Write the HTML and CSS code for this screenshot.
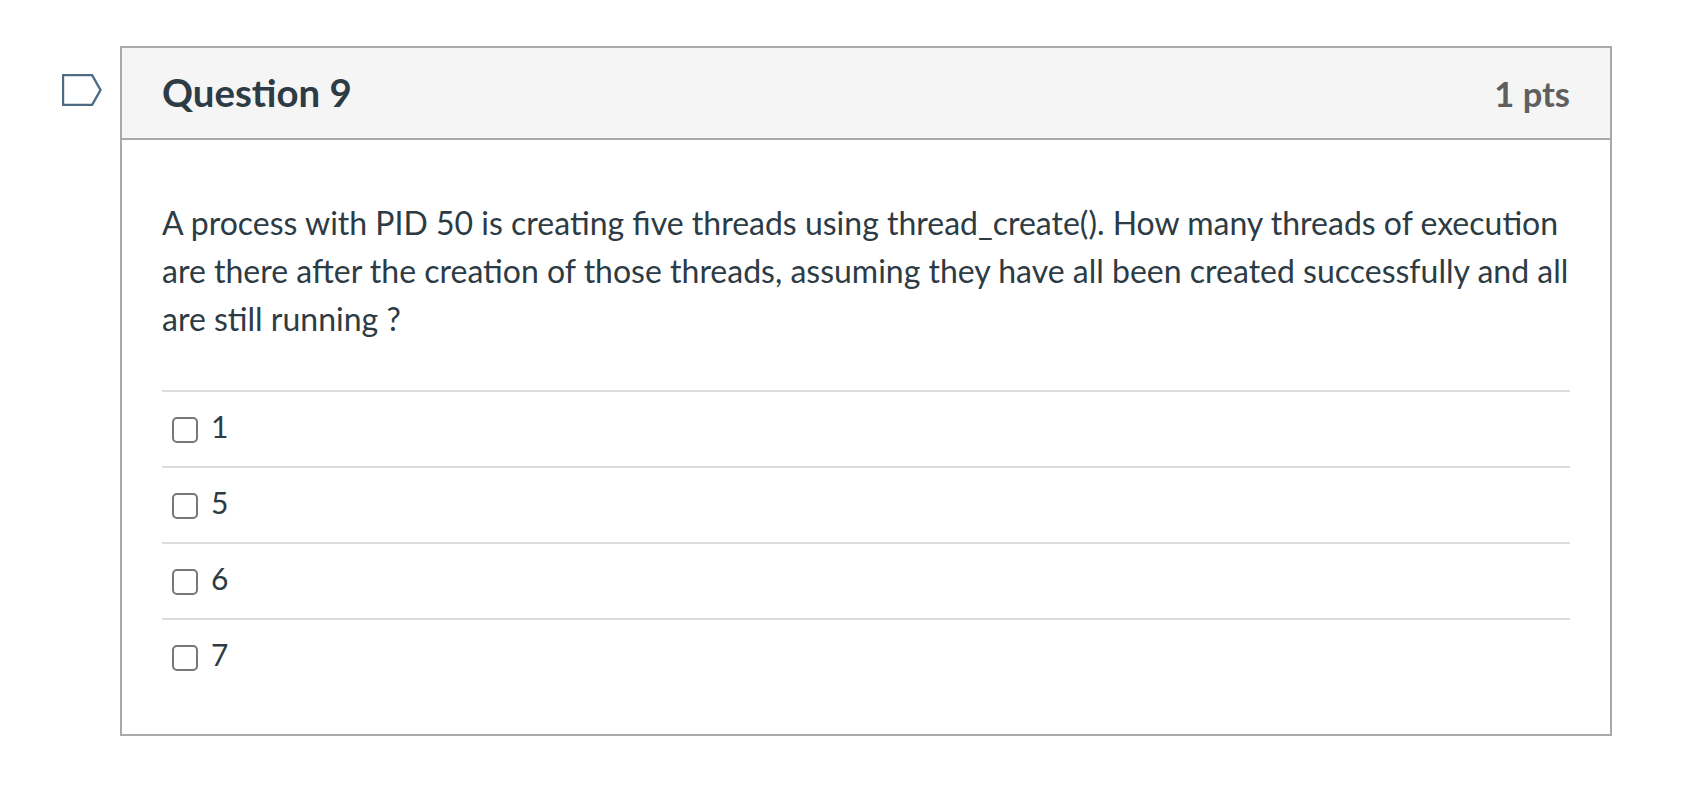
FILE: index.html
```html
<!DOCTYPE html>
<html lang="en">
<head>
    <meta charset="UTF-8">
    <title>Question 9</title>
    <link rel="stylesheet" href="styles.css">
</head>
<body>
    <div class="quiz-page">
        <svg class="flag-icon" viewBox="0 0 40 32" width="40" height="32" xmlns="http://www.w3.org/2000/svg">
            <path d="M1 1 H30 L38.5 16 L30 31 H1 Z" fill="none" stroke="#4d6b85" stroke-width="2.4"/>
        </svg>
        <div class="question-card">
            <div class="question-header">
                <div class="question-title">Question 9</div>
                <div class="question-points">1 pts</div>
            </div>
            <div class="question-body">
                <p class="question-text">A process with PID 50 is creating five threads using thread_create(). How many threads of execution are there after the creation of those threads, assuming they have all been created successfully and all are still running ?</p>
                <div class="answers">
                    <label class="answer"><span class="check-box"></span><span class="answer-label">1</span></label>
                    <label class="answer"><span class="check-box"></span><span class="answer-label">5</span></label>
                    <label class="answer"><span class="check-box"></span><span class="answer-label">6</span></label>
                    <label class="answer"><span class="check-box"></span><span class="answer-label">7</span></label>
                </div>
            </div>
        </div>
    </div>
</body>
</html>
```
FILE: styles.css
```css
body {
    margin: 0;
    padding: 0;
    background: #ffffff;
    font-family: 'Lato', 'Liberation Sans', sans-serif;
    color: #2d3b45;
    overflow: hidden;
}

.quiz-page {
    display: flex;
    align-items: flex-start;
    padding: 46px 94px 0 62px;
}

.flag-icon {
    flex: none;
    margin: 28px 18px 0 0;
}

.question-card {
    flex: 1;
    border: 2px solid #a9a9a9;
    height: 690px;
    box-sizing: border-box;
}

.question-header {
    display: flex;
    justify-content: space-between;
    align-items: center;
    height: 90px;
    padding: 0 40px;
    background: #f5f5f5;
    border-bottom: 2px solid #a9a9a9;
}

.question-title {
    font-size: 38.4px;
    font-weight: bold;
    margin-bottom: 2px;
}

.question-points {
    font-size: 34.5px;
    font-weight: bold;
    color: #5f5f5f;
}

.question-body {
    padding: 0 40px;
}

.question-text {
    margin: 0;
    padding-top: 59px;
    font-size: 32px;
    line-height: 48px;
    height: 191px;
}

.answer {
    display: flex;
    align-items: flex-start;
    height: 76px;
    box-sizing: border-box;
    border-top: 2px solid #dcdcdc;
    padding: 14px 10px 0;
    font-size: 30px;
}

.check-box {
    width: 26px;
    height: 26px;
    box-sizing: border-box;
    border: 2px solid #777777;
    border-radius: 5px;
    margin: 11px 13px 0 0;
}

.answer-label {
    line-height: 40px;
}
```
